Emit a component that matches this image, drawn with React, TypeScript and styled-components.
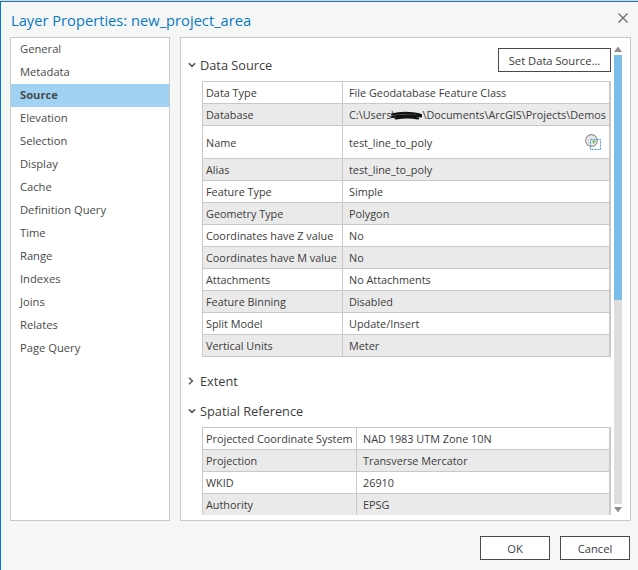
import React from "react";
import styled, { createGlobalStyle } from "styled-components";

const GlobalStyle = createGlobalStyle`
  html, body {
    margin: 0;
    padding: 0;
    background: #f5f7f7;
  }
  #root {
    height: 570px;
  }
`;

const Dialog = styled.div`
  box-sizing: border-box;
  width: 638px;
  height: 570px;
  overflow: hidden;
  display: flex;
  flex-direction: column;
  background: #f5f7f7;
  border-top: 1px solid #d8d8d8;
  font-family: "Open Sans", "Noto Sans", sans-serif;
  color: #323232;
  &::before {
    content: "";
    display: block;
    height: 1px;
    background: #0f75b8;
  }
`;

const Frame = styled.div`
  flex: 1;
  display: flex;
  flex-direction: column;
  border-left: 1px solid #0078d0;
  min-height: 0;
`;

const TitleBar = styled.div`
  height: 35px;
  display: flex;
  align-items: center;
  justify-content: space-between;
  padding: 0 9px 0 10px;
`;

const Title = styled.div`
  font-size: 14.7px;
  color: #0b79c1;
`;

const CloseButton = styled.div`
  width: 12px;
  height: 12px;
  display: flex;
  margin-bottom: 3px;
`;

const Body = styled.div`
  display: flex;
  gap: 10px;
  height: 484px;
  padding: 0 7px 0 9px;
`;

const Sidebar = styled.div`
  box-sizing: border-box;
  width: 160px;
  background: #fff;
  border: 1px solid #c9c9c9;
`;

const NavItem = styled.div<{ $active?: boolean }>`
  box-sizing: border-box;
  height: 23px;
  line-height: 22px;
  padding-left: 9px;
  font-size: 11.2px;
  color: #4a4a4a;
  background: ${(p) => (p.$active ? "#a0d3f3" : "transparent")};
  font-weight: ${(p) => (p.$active ? 700 : 400)};
`;

const Panel = styled.div`
  box-sizing: border-box;
  flex: 1;
  display: flex;
  background: #fff;
  border: 1px solid #c9c9c9;
  padding: 0 8px 5px 0;
  min-width: 0;
`;

const Content = styled.div`
  flex: 1;
  min-width: 0;
  overflow: hidden;
  padding-top: 10px;
`;

const SectionHead = styled.div`
  display: flex;
  align-items: center;
  height: 22px;
  padding-left: 7px;
  gap: 4px;
  font-size: 12.75px;
  color: #3c3c3c;
`;

const FirstRow = styled.div`
  display: flex;
  align-items: flex-start;
  justify-content: space-between;
  height: 33px;
  padding-right: 2px;
`;

const FirstHead = styled(SectionHead)`
  margin-top: 6px;
`;

const ActionButton = styled.div<{ $width?: number }>`
  box-sizing: border-box;
  width: ${(p) => p.$width ?? 70}px;
  height: 24px;
  border: 1px solid #4a4a4a;
  background: #fff;
  display: flex;
  align-items: center;
  justify-content: center;
  font-size: 11.2px;
  color: #3c3c3c;
  flex-shrink: 0;
`;

const Table = styled.div<{ $col: number }>`
  box-sizing: border-box;
  margin: 0 2px 0 21px;
  border-top: 1px solid #c9c9c9;
  border-left: 1px solid #c9c9c9;
  border-right: 2px solid #c9c9c9;
  display: grid;
  grid-template-columns: ${(p) => p.$col}px 1fr;
`;

const Cell = styled.div<{ $alt?: boolean; $tall?: boolean; $first?: boolean }>`
  box-sizing: border-box;
  height: ${(p) => (p.$tall ? 33 : 22)}px;
  display: flex;
  align-items: center;
  justify-content: space-between;
  padding: 0 ${(p) => (p.$first ? 3 : 5)}px 0 ${(p) => (p.$first ? 3 : 6)}px;
  font-size: 10.85px;
  white-space: nowrap;
  overflow: hidden;
  color: #3c3c3c;
  background: ${(p) => (p.$alt ? "#eaeaea" : "#fff")};
  border-bottom: 1px solid #c9c9c9;
  border-right: ${(p) => (p.$first ? "1px solid #c9c9c9" : "none")};
`;

const Gap = styled.div<{ $h: number }>`
  height: ${(p) => p.$h}px;
`;

const ScrollBar = styled.div`
  width: 8px;
  display: flex;
  flex-direction: column;
  align-items: center;
  padding-top: 8px;
  margin: 0 0 2px 1px;
  flex-shrink: 0;
`;

const ScrollThumb = styled.div`
  width: 8px;
  height: 245px;
  margin-top: 2px;
  background: #7cbce8;
`;

const ScrollTrack = styled.div`
  width: 8px;
  flex: 1;
  margin-bottom: 2px;
  background: #dedede;
`;

const Footer = styled.div`
  flex: 1;
  display: flex;
  justify-content: flex-end;
  align-items: flex-start;
  gap: 10px;
  padding: 15px 8px 0 0;
`;

const Arrow = ({ up }: { up?: boolean }) => (
  <svg width="8" height="7" viewBox="0 0 8 7" style={{ display: "block", flexShrink: 0 }}>
    <path d={up ? "M4 0.5 L8 6 H0 Z" : "M0 1 H8 L4 6.5 Z"} fill="#8e8e8e" />
  </svg>
);

const Chevron = ({ open }: { open: boolean }) => (
  <svg width="8" height="8" viewBox="0 0 8 8" style={{ display: "block", flexShrink: 0 }}>
    <path
      d={open ? "M0.8 2.2 L4 5.4 L7.2 2.2" : "M1 0.8 L4.4 4 L1 7.2"}
      fill="none"
      stroke="#555"
      strokeWidth="1.5"
    />
  </svg>
);

const GlobeIcon = () => (
  <svg width="16" height="16" viewBox="0 0 16 16" style={{ display: "block", flexShrink: 0, marginRight: 3 }}>
    <circle cx="6.5" cy="6.5" r="5.8" fill="#f4f4f4" stroke="#8f8f8f" strokeWidth="1.2" />
    <circle cx="6.5" cy="6.5" r="3.6" fill="none" stroke="#d2d2d2" strokeWidth="1" />
    <path d="M6.5 6.5 H11 L8.7 10 Z" fill="#7dbb6e" />
    <rect x="5.5" y="5.5" width="10" height="10" fill="none" stroke="#3f9ad6" strokeWidth="1" strokeDasharray="2 1" />
  </svg>
);

// the user name is scribbled out in the original
const Scribble = () => (
  <svg
    width="31"
    height="9"
    viewBox="0 0 31 9"
    style={{ display: "inline-block", verticalAlign: "-1px", marginLeft: -4 }}
  >
    <path
      d="M1 3.5 C8 1.5 16 1.5 24 2.5 C27 3 29 3.5 30 4 M1 6 C8 4 18 4 30 5.5 M5 7.5 C12 6 20 6 27 7.5"
      fill="none"
      stroke="#111"
      strokeWidth="2.2"
      strokeLinecap="round"
    />
  </svg>
);

const navItems = [
  "General", "Metadata", "Source", "Elevation", "Selection", "Display", "Cache",
  "Definition Query", "Time", "Range", "Indexes", "Joins", "Relates", "Page Query",
];

const sourceRows: [string, string][] = [
  ["Alias", "test_line_to_poly"],
  ["Feature Type", "Simple"],
  ["Geometry Type", "Polygon"],
  ["Coordinates have Z value", "No"],
  ["Coordinates have M value", "No"],
  ["Attachments", "No Attachments"],
  ["Feature Binning", "Disabled"],
  ["Split Model", "Update/Insert"],
  ["Vertical Units", "Meter"],
];

const spatialRows: [string, string][] = [
  ["Projected Coordinate System", "NAD 1983 UTM Zone 10N"],
  ["Projection", "Transverse Mercator"],
  ["WKID", "26910"],
  ["Authority", "EPSG"],
];

export default function App() {
  return (
    <>
      <GlobalStyle />
      <Dialog>
        <Frame>
          <TitleBar>
            <Title>Layer Properties: new_project_area</Title>
            <CloseButton>
              <svg width="12" height="12" viewBox="0 0 12 12">
                <path d="M1.5 1.5 L10.5 10.5 M10.5 1.5 L1.5 10.5" stroke="#6e6e6e" strokeWidth="1.4" />
              </svg>
            </CloseButton>
          </TitleBar>
          <Body>
            <Sidebar>
              {navItems.map((item) => (
                <NavItem key={item} $active={item === "Source"}>
                  {item}
                </NavItem>
              ))}
            </Sidebar>
            <Panel>
              <Content>
                <FirstRow>
                  <FirstHead>
                    <Chevron open />
                    Data Source
                  </FirstHead>
                  <ActionButton $width={113}>Set Data Source...</ActionButton>
                </FirstRow>
                <Table $col={140}>
                  <Cell $first>Data Type</Cell>
                  <Cell>File Geodatabase Feature Class</Cell>
                  <Cell $first $alt>Database</Cell>
                  <Cell $alt>
                    <span>
                      C:\Users\<Scribble />\Documents\ArcGIS\Projects\Demos
                    </span>
                  </Cell>
                  <Cell $first $tall>Name</Cell>
                  <Cell $tall>
                    test_line_to_poly
                    <GlobeIcon />
                  </Cell>
                  {sourceRows.map(([label, value], i) => (
                    <React.Fragment key={label}>
                      <Cell $first $alt={i % 2 === 0}>{label}</Cell>
                      <Cell $alt={i % 2 === 0}>{value}</Cell>
                    </React.Fragment>
                  ))}
                </Table>
                <Gap $h={13} />
                <SectionHead>
                  <Chevron open={false} />
                  Extent
                </SectionHead>
                <Gap $h={8} />
                <SectionHead>
                  <Chevron open />
                  Spatial Reference
                </SectionHead>
                <Gap $h={5} />
                <Table $col={154}>
                  {spatialRows.map(([label, value], i) => (
                    <React.Fragment key={label}>
                      <Cell $first $alt={i % 2 === 1}>{label}</Cell>
                      <Cell $alt={i % 2 === 1}>{value}</Cell>
                    </React.Fragment>
                  ))}
                </Table>
              </Content>
              <ScrollBar>
                <Arrow up />
                <ScrollThumb />
                <ScrollTrack />
                <Arrow />
              </ScrollBar>
            </Panel>
          </Body>
          <Footer>
            <ActionButton>OK</ActionButton>
            <ActionButton>Cancel</ActionButton>
          </Footer>
        </Frame>
      </Dialog>
    </>
  );
}
